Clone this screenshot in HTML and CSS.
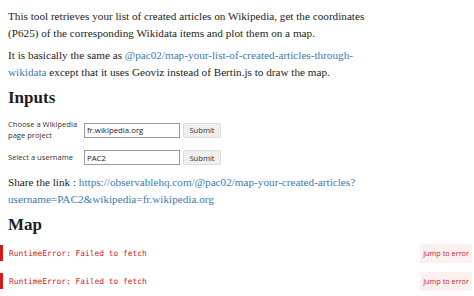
FILE: index.html
```html
<!DOCTYPE html>
<html lang="en">
<head>
    <meta charset="UTF-8">
    <meta name="viewport" content="width=device-width, initial-scale=1.0">
    <title>Map your created articles</title>
    <link rel="stylesheet" href="styles.css">
</head>
<body>
    <div class="notebook">
        <p>This tool retrieves your list of created articles on Wikipedia, get the coordinates (P625) of the corresponding Wikidata items and plot them on a map.</p>
        <p>It is basically the same as <a href="#">@pac02/map-your-list-of-created-articles-through-wikidata</a> except that it uses Geoviz instead of Bertin.js to draw the map.</p>

        <h2>Inputs</h2>
        <form class="field">
            <label>Choose a Wikipedia page project</label>
            <input type="text" value="fr.wikipedia.org">
            <button type="button">Submit</button>
        </form>
        <form class="field">
            <label>Select a username</label>
            <input type="text" value="PAC2">
            <button type="button">Submit</button>
        </form>

        <p class="share">Share the link : <a href="#">https://observablehq.com/@pac02/map-your-created-articles?username=PAC2&amp;wikipedia=fr.wikipedia.org</a></p>

        <h2 class="map-title">Map</h2>
        <div class="error">
            <span>RuntimeError: Failed to fetch</span>
            <a href="#" class="jump">Jump to error</a>
        </div>
        <div class="error">
            <span>RuntimeError: Failed to fetch</span>
            <a href="#" class="jump">Jump to error</a>
        </div>
    </div>
</body>
</html>
```

FILE: styles.css
```css
body {
    margin: 0;
    background: #fff;
    color: #1b1e23;
    font-family: "Liberation Serif", serif;
    font-size: 11.2px;
    line-height: 17px;
}

.notebook {
    padding: 8px 0 0 0;
}

p {
    margin: 0 0 5px 8px;
    max-width: 370px;
}

a {
    color: #3b7bb0;
    text-decoration: none;
}

h2 {
    font-size: 17px;
    font-weight: bold;
    margin: 7px 0 11px 8px;
    line-height: 20px;
}

.map-title {
    margin-bottom: 10px;
}

.field {
    display: flex;
    align-items: center;
    margin: 0 0 9px 8px;
    font-family: "Open Sans", sans-serif;
    font-size: 7.6px;
    line-height: 11px;
    color: #333;
}

.field label {
    flex: none;
    width: 76px;
}

.field input {
    flex: none;
    width: 96px;
    height: 15px;
    box-sizing: border-box;
    border: 1px solid #999;
    padding: 0 2px;
    font-family: inherit;
    font-size: 7.8px;
    color: #222;
}

.field button {
    flex: none;
    margin-left: 3px;
    width: 38px;
    height: 15px;
    padding: 0;
    border: 1px solid #ddd;
    background: #efefef;
    border-radius: 2px;
    font-family: inherit;
    font-size: 7.6px;
    color: #333;
}

.share {
    margin-top: 8px;
    margin-bottom: 0;
}

.error {
    display: flex;
    justify-content: space-between;
    align-items: center;
    height: 16px;
    border-left: 3px solid #d21c1c;
    padding: 0 2px 0 6px;
    margin-bottom: 12px;
    font-family: "DejaVu Sans Mono", monospace;
    font-size: 7.9px;
    color: #c4242b;
}

.jump {
    font-family: "Open Sans", sans-serif;
    font-size: 7.3px;
    color: #c4242b;
    background: #fdf0f0;
    padding: 1px 3px;
}
```
